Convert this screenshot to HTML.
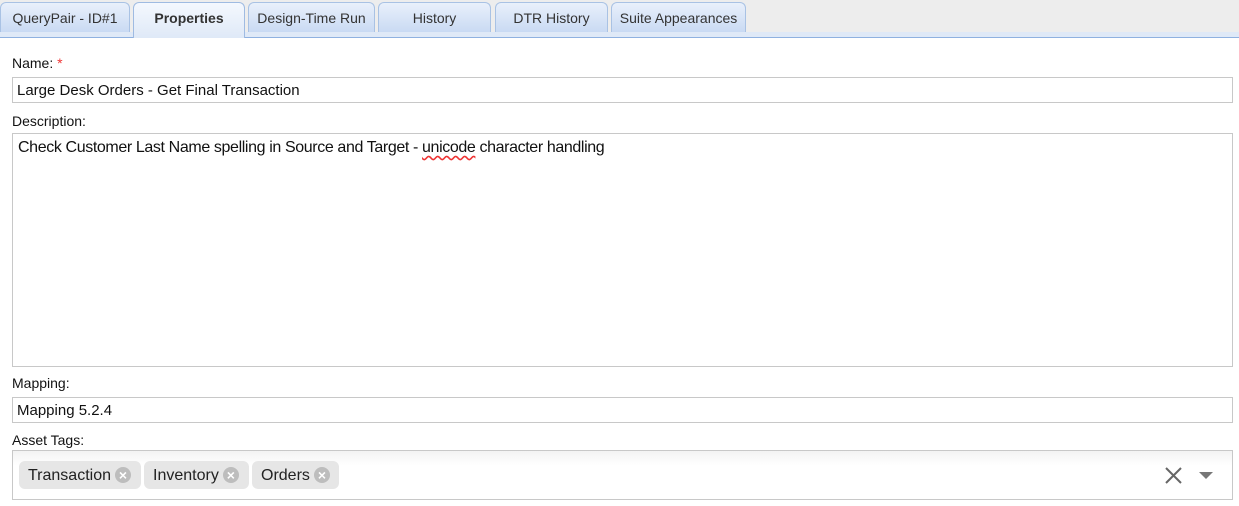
<!DOCTYPE html>
<html><head><meta charset="utf-8"><style>
body{margin:0;width:1239px;height:506px;background:#fff;font-family:"Liberation Sans",sans-serif;font-size:14px;color:#222;position:relative;overflow:hidden}
.tabbar{position:absolute;left:0;top:0;width:1239px;height:32px;background:#ededed}
.strip{position:absolute;left:0;top:32px;width:1239px;height:5px;background:#dfe9f7;border-bottom:1px solid #8fb1e0}
.tab{position:absolute;top:2px;height:30px;border:1px solid #a9c2e4;border-bottom:none;border-radius:6px 6px 0 0;background:linear-gradient(#e9f0fb,#c9daf3);box-sizing:border-box;text-align:center;line-height:30px;color:#333;font-size:14px}
.tab.act{background:linear-gradient(#f4f8fe,#dfe9f7);height:36px;font-weight:bold;border-color:#9fbbe2}
.lbl{position:absolute;left:12px;font-size:14px;color:#111}
.inp{position:absolute;left:12px;width:1221px;border:1px solid #c8c8c8;box-sizing:border-box;background:#fff;color:#111}
.chip{position:absolute;top:461px;height:28px;background:#e6e6e6;border-radius:6px;font-size:16px;line-height:30px;padding-left:9px;box-sizing:border-box;color:#222}
.x{display:inline-block;width:16px;height:16px;border-radius:50%;background:#bdbdbd;color:#fff;font-size:14px;line-height:16px;text-align:center;vertical-align:0px;margin-left:4px;font-weight:bold}
</style></head><body>
<div class="tabbar"></div>
<div class="strip"></div>
<div class="tab" style="left:0;width:130px">QueryPair - ID#1</div>
<div class="tab act" style="left:133px;width:112px">Properties</div>
<div class="tab" style="left:248px;width:127px">Design-Time Run</div>
<div class="tab" style="left:378px;width:113px">History</div>
<div class="tab" style="left:495px;width:113px">DTR History</div>
<div class="tab" style="left:611px;width:135px">Suite Appearances</div>

<div class="lbl" style="top:55px">Name: <span style="color:#e33">*</span></div>
<div class="inp" style="top:77px;height:26px;line-height:26px;padding-left:4px;font-size:15px">Large Desk Orders - Get Final Transaction</div>
<div class="lbl" style="top:113px">Description:</div>
<div class="inp" style="top:133px;height:234px;padding:5px 5px;font-size:16px;letter-spacing:-0.38px">Check Customer Last Name spelling in Source and Target - <span style="text-decoration:underline wavy #e33;text-underline-offset:3px">unicode</span> character handling</div>
<div class="lbl" style="top:375px">Mapping:</div>
<div class="inp" style="top:397px;height:26px;line-height:26px;padding-left:4px;font-size:15px">Mapping 5.2.4</div>
<div class="lbl" style="top:432px">Asset Tags:</div>
<div class="inp" style="top:450px;height:50px;background:linear-gradient(#f3f3f3,#fff 30%)"></div>
<div class="chip" style="left:19px;width:122px">Transaction<span class="x">×</span></div>
<div class="chip" style="left:144px;width:105px">Inventory<span class="x">×</span></div>
<div class="chip" style="left:252px;width:87px">Orders<span class="x">×</span></div>
<svg style="position:absolute;left:1165px;top:467px" width="17" height="17"><path d="M1 1L16 16M16 1L1 16" stroke="#666" stroke-width="2"/></svg>
<svg style="position:absolute;left:1199px;top:472px" width="14" height="8"><path d="M0 0H14L7 7Z" fill="#777"/></svg>
</body></html>
